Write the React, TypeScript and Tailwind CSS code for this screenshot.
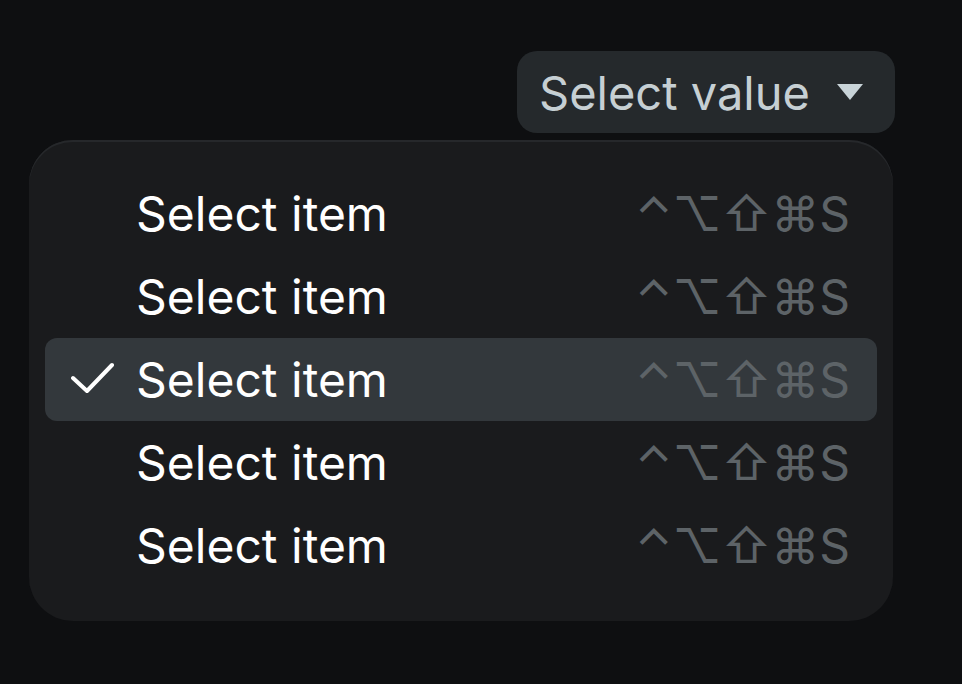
const items = [
  { label: "Select item", selected: false },
  { label: "Select item", selected: false },
  { label: "Select item", selected: true },
  { label: "Select item", selected: false },
  { label: "Select item", selected: false },
];

export default function App() {
  return (
    <div
      className="w-[962px] h-[684px] bg-[#0e0f11] overflow-hidden"
      style={{ fontFamily: "Inter, 'Noto Sans', sans-serif" }}
    >
      <div className="w-[864px] ml-[29px] pt-[51px] flex flex-col">
        {/* Trigger */}
        <button className="self-end mr-[-2px] w-[378px] h-[82px] rounded-[20px] bg-[#25292c] flex items-center pl-[22px] pr-[32px] text-[#c6cfd3] text-[47px] leading-none">
          <span>Select value</span>
          <svg className="ml-auto" width="26" height="16" viewBox="0 0 26 16">
            <path d="M0 0 H26 L13 16 Z" fill="#c8d3d8" />
          </svg>
        </button>

        {/* Menu */}
        <div className="mt-[7px] rounded-[44px] bg-[#1a1b1d] shadow-[inset_0_2px_0_#26282b] px-[16px] pt-[32px] pb-[34px] flex flex-col">
          {items.map((item, idx) => (
            <div
              key={idx}
              className={
                "h-[83px] rounded-[12px] flex items-center pl-[25px] pr-[27px] text-[48px] leading-none " +
                (item.selected ? "bg-[#33383c]" : "")
              }
            >
              <span className="w-[66px] flex items-center">
                {item.selected && (
                  <svg width="44" height="33" viewBox="0 0 44 33" className="mt-[-4px]">
                    <path
                      d="M3 17 L17 30 L42 4"
                      fill="none"
                      stroke="white"
                      strokeWidth="4"
                      strokeLinecap="round"
                      strokeLinejoin="round"
                    />
                  </svg>
                )}
              </span>
              <span className="text-white">{item.label}</span>
              <span className="ml-auto text-[#5d6367]">⌃⌥⇧⌘S</span>
            </div>
          ))}
        </div>
      </div>
    </div>
  );
}
